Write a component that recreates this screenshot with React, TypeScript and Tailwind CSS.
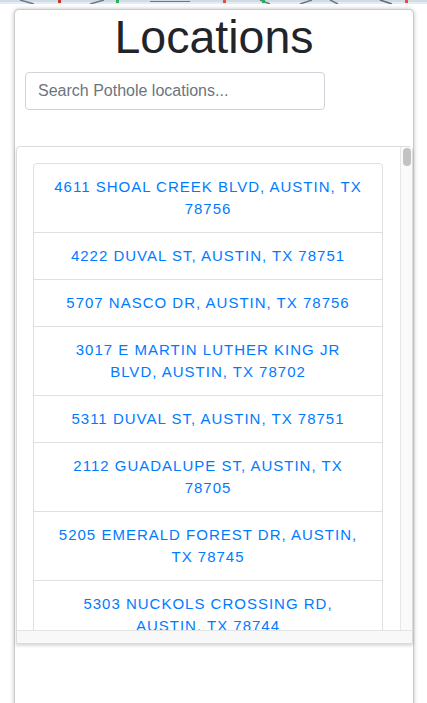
const locations = [
  "4611 Shoal Creek Blvd, Austin, TX 78756",
  "4222 Duval St, Austin, TX 78751",
  "5707 Nasco Dr, Austin, TX 78756",
  "3017 E Martin Luther King Jr Blvd, Austin, TX 78702",
  "5311 Duval St, Austin, TX 78751",
  "2112 Guadalupe St, Austin, TX 78705",
  "5205 Emerald Forest Dr, Austin, TX 78745",
  "5303 Nuckols Crossing Rd, Austin, TX 78744",
];

function MapStrip() {
  // sliver of the map that peeks out above the panel
  return (
    <svg className="block h-[4px] w-full" viewBox="0 0 427 4" preserveAspectRatio="none">
      <rect width="427" height="4" fill="#cfdbe6" />
      <rect x="0" y="2" width="427" height="2" fill="#e4ebf1" />
      <path d="M20 0 L34 4 M90 4 L104 0 M260 0 L270 4 M300 4 L312 0 M330 0 L338 4" stroke="#6b7a8c" strokeWidth="1.5" />
      <path d="M380 0 L392 4" stroke="#5b6b7d" strokeWidth="1.5" />
      <rect x="58" y="0" width="3" height="3" fill="#c0392b" />
      <rect x="116" y="0" width="3" height="3" fill="#27ae60" />
      <rect x="223" y="0" width="3" height="3" fill="#e74c3c" />
      <rect x="262" y="0" width="3" height="3" fill="#27ae60" />
      <rect x="405" y="0" width="3" height="3" fill="#e74c3c" />
      <rect x="150" y="1" width="40" height="1" fill="#3b82c4" />
    </svg>
  );
}

export default function App() {
  return (
    <div className="min-h-screen bg-white font-['Liberation_Sans',Arial,sans-serif] overflow-hidden">
      <MapStrip />

      <div className="mt-[5px] ml-[14px] w-[400px] h-[720px] bg-white border border-[#cbcbcb] rounded-[5px] shadow-[0_0_4px_rgba(0,0,0,0.25)]">
        <div className="px-[10px]">
          <h1 className="text-center text-[46.5px] leading-[55px] text-[#212529]">Locations</h1>
          <input
            type="text"
            placeholder="Search Pothole locations..."
            className="mt-[7px] w-[300px] h-[38px] px-3 text-[16px] text-[#495057] placeholder-[#6c757d] border border-[#ced4da] rounded-[4px] outline-none bg-white"
          />
        </div>

        {/* scroll box */}
        <div className="mt-[36px] ml-px w-[397px] border border-[#dcdcdc] rounded-t-[4px] bg-white shadow-[0_2px_3px_rgba(0,0,0,0.15)]">
          <div className="flex">
            <div className="flex-1 h-[483px] overflow-hidden pl-4 pt-4">
              <ul className="w-[350px] border border-[#dfdfdf] rounded-[4px] divide-y divide-[#dfdfdf] bg-white">
                {locations.map((loc) => (
                  <li
                    key={loc}
                    className="px-[19px] py-3 text-center text-[15px] leading-[22px] tracking-[1px] uppercase text-[#007bff]"
                  >
                    {loc}
                  </li>
                ))}
              </ul>
            </div>
            <div className="w-[12px] h-[483px] border-l border-[#e6e6e6] bg-[#fafafa] pt-px pl-[2px]">
              <div className="w-[8px] h-[18px] rounded-full bg-[#c2c2c2]" />
            </div>
          </div>
          <div className="h-[13px] border-t border-[#e3e3e3] bg-[#f8f8f8]" />
        </div>
      </div>
    </div>
  );
}
